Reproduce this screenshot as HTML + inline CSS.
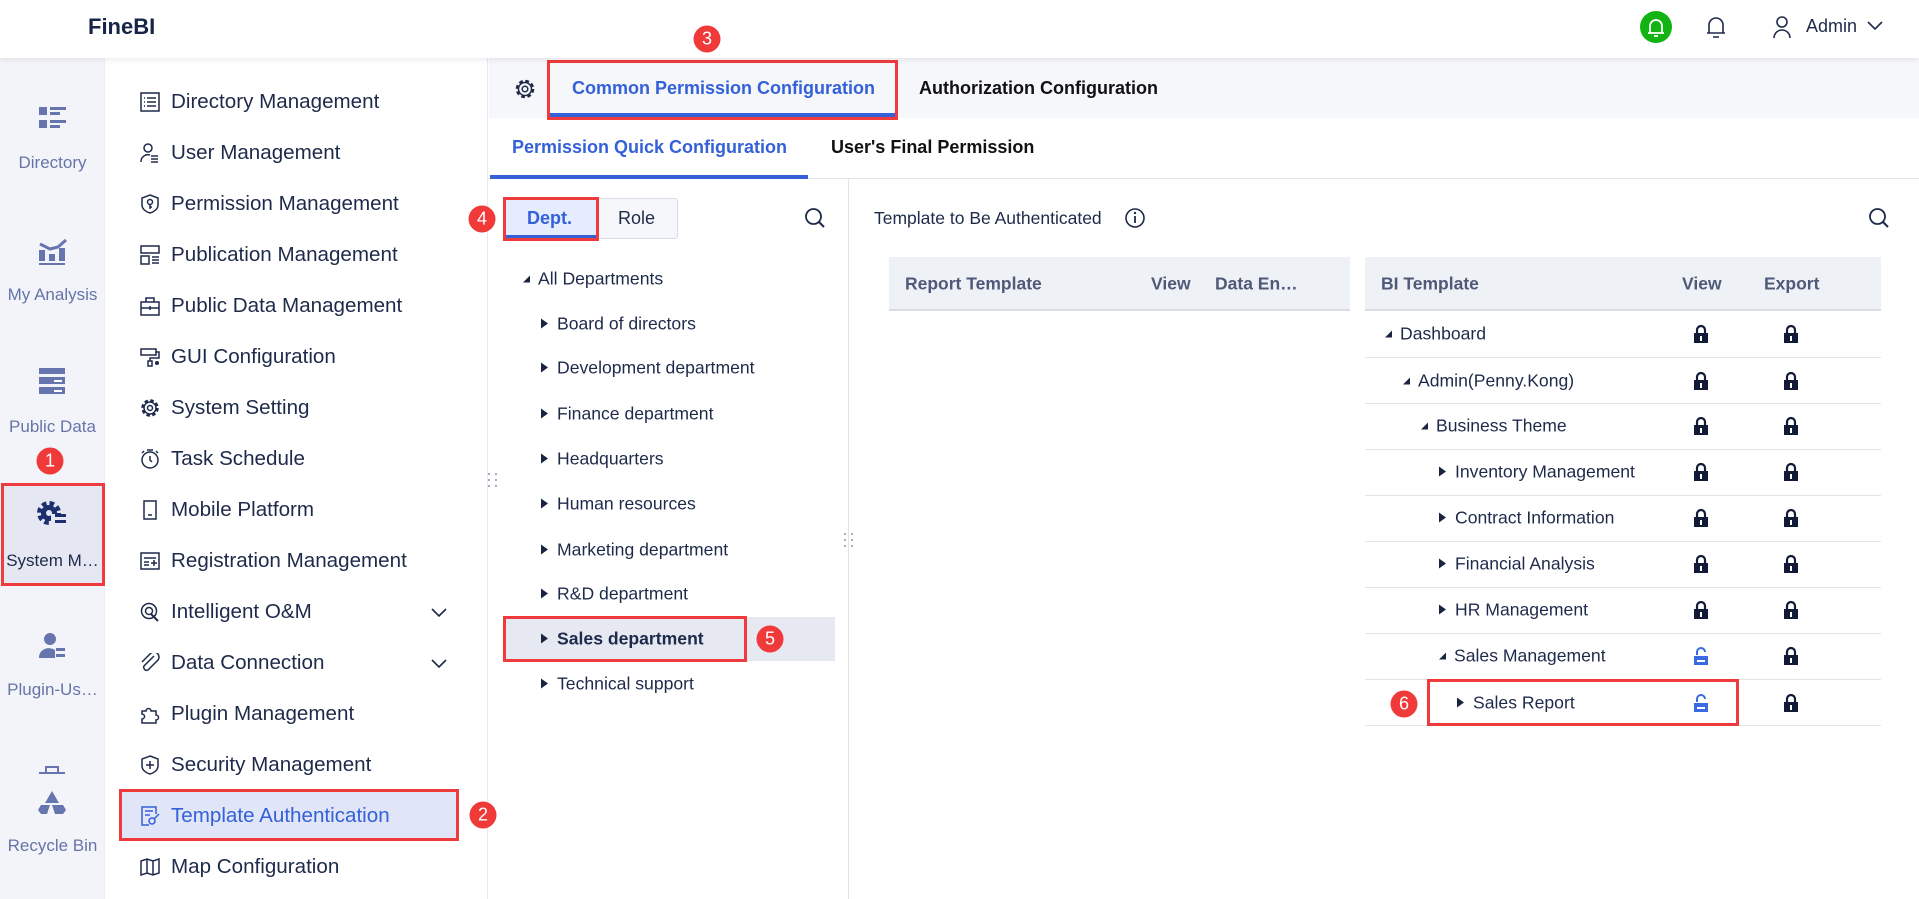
<!DOCTYPE html>
<html><head><meta charset="utf-8"><style>
*{margin:0;padding:0;box-sizing:border-box}
body{width:1919px;height:899px;position:relative;overflow:hidden;background:#fff;font-family:"Liberation Sans",sans-serif;color:#1f2a48}
.a{position:absolute;white-space:nowrap}
.badge{position:absolute;width:27px;height:27px;border-radius:50%;background:#f03a3a;color:#fff;font-size:18px;text-align:center;line-height:27px;transform:translate(-50%,-50%)}
.red{position:absolute;border:3px solid #ef3b3b}
.rl{position:absolute;left:0;width:105px;text-align:center;font-size:17px;color:#6675a8;transform:translateY(-50%)}
.ri{position:absolute;left:36px;transform:translateY(-50%)}
.mi{position:absolute;left:171px;font-size:20.6px;color:#1e2a4a;transform:translateY(-50%)}
.mic{position:absolute;left:140px;transform:translateY(-50%)}
.tr{position:absolute;font-size:17.6px;color:#1e2a4a;transform:translateY(-50%)}
.tri{display:inline-block;width:0;height:0;border-top:5px solid transparent;border-bottom:5px solid transparent;border-left:7px solid #1a2440;margin-right:9px;vertical-align:1px}
.trd{display:inline-block;width:0;height:0;border-left:7px solid transparent;border-bottom:7px solid #1a2440;margin-right:8px;vertical-align:2px}
.row{position:absolute;left:1365px;width:516px;height:1px;background:#e2e4ea}
.lk{position:absolute;transform:translate(-50%,-50%)}
.th{position:absolute;font-size:17.5px;font-weight:bold;color:#505a78;transform:translateY(-50%)}
</style></head><body>

<!-- header -->
<div class="a" style="left:0;top:0;width:1919px;height:58px;background:#fff;box-shadow:0 2px 6px rgba(0,0,0,.08);z-index:2"></div>
<div class="a" style="left:88px;top:14px;font-size:22px;font-weight:bold;color:#162447;z-index:3">FineBI</div>
<div class="a" style="left:1640px;top:11px;width:32px;height:32px;border-radius:50%;background:#12b312;z-index:3">
<svg width="32" height="32" viewBox="0 0 32 32"><path d="M10 22V15a6 6 0 0 1 12 0v7zM8 22h16M14 25h4M16 8v1" stroke="#fff" stroke-width="1.8" fill="none"/></svg></div>
<svg class="a" style="left:1704px;top:14px;z-index:3" width="24" height="26" viewBox="0 0 24 26"><path d="M5 19V11a7 7 0 0 1 14 0v8zM3 19h18M9 23h6" stroke="#1e2a4a" stroke-width="1.6" fill="none"/></svg>
<svg class="a" style="left:1772px;top:15px;z-index:3" width="20" height="24" viewBox="0 0 20 24"><circle cx="10" cy="7" r="5" stroke="#1e2a4a" stroke-width="1.6" fill="none"/><path d="M2 23a8 8 0 0 1 16 0" stroke="#1e2a4a" stroke-width="1.6" fill="none"/></svg>
<div class="a" style="left:1806px;top:16px;font-size:18px;color:#1e2a4a;z-index:3">Admin</div>
<svg class="a" style="left:1867px;top:21px;z-index:3" width="16" height="10" viewBox="0 0 16 10"><path d="M1 1l7 7 7-7" stroke="#1e2a4a" stroke-width="1.6" fill="none"/></svg>

<!-- rail -->
<div class="a" style="left:0;top:58px;width:105px;height:841px;background:#f3f4f9;border-right:1px solid #eceef3"></div>
<svg class="ri" style="top:118px" width="32" height="28" viewBox="0 0 32 28"><rect x="3" y="3" width="8" height="8" fill="#6675ad"/><rect x="3" y="16" width="8" height="8" fill="#6675ad"/><rect x="14" y="3" width="16" height="3" fill="#6675ad"/><rect x="14" y="8" width="10" height="3" fill="#6675ad"/><rect x="14" y="16" width="16" height="3" fill="#6675ad"/><rect x="14" y="21" width="10" height="3" fill="#6675ad"/></svg>
<div class="rl" style="top:163px">Directory</div>
<svg class="ri" style="top:251px" width="32" height="30" viewBox="0 0 32 30"><path d="M4 8l10 5 8-2 8-7" stroke="#6675ad" stroke-width="3" fill="none"/><rect x="3" y="14" width="6" height="11" fill="#6675ad"/><rect x="13" y="18" width="6" height="7" fill="#6675ad"/><rect x="23" y="12" width="6" height="13" fill="#6675ad"/><rect x="3" y="27" width="26" height="2" fill="#6675ad"/></svg>
<div class="rl" style="top:295px">My Analysis</div>
<svg class="ri" style="top:381px" width="32" height="30" viewBox="0 0 32 30"><rect x="3" y="2" width="26" height="6" fill="#6675ad"/><rect x="3" y="11" width="26" height="7" fill="#6675ad"/><rect x="3" y="21" width="26" height="7" fill="#6675ad"/><rect x="18" y="14" width="8" height="2" fill="#fff"/><rect x="18" y="24" width="8" height="2" fill="#fff"/></svg>
<div class="rl" style="top:427px">Public Data</div>
<div class="a" style="left:2px;top:484px;width:102px;height:101px;background:#e5e8f2"></div>
<div class="red" style="left:1px;top:483px;width:104px;height:103px"></div>
<svg class="ri" style="top:513px" width="32" height="30" viewBox="0 0 32 30"><circle cx="13" cy="15" r="9.5" fill="none" stroke="#1e2f6e" stroke-width="5" stroke-dasharray="4.5 3"/><circle cx="13" cy="15" r="8" fill="#1e2f6e"/><circle cx="13" cy="15" r="3" fill="#e5e8f2"/><rect x="15" y="16" width="17" height="12" fill="#e5e8f2"/><rect x="19" y="16" width="11" height="3" fill="#1e2f6e"/><rect x="19" y="22" width="11" height="3" fill="#1e2f6e"/></svg>
<div class="rl" style="top:561px;color:#1e2a4a">System M…</div>
<div class="badge" style="left:50px;top:461px">1</div>
<svg class="ri" style="top:646px" width="32" height="30" viewBox="0 0 32 30"><circle cx="14" cy="8" r="6" fill="#6675ad"/><path d="M3 27a10 9 0 0 1 16-8v8z" fill="#6675ad"/><rect x="20" y="17" width="9" height="3" fill="#6675ad"/><rect x="20" y="23" width="9" height="3" fill="#6675ad"/></svg>
<div class="rl" style="top:690px">Plugin-Us…</div>
<svg class="ri" style="top:769px" width="32" height="10" viewBox="0 0 32 10"><path d="M3 9h26M10 9V3h12v6" stroke="#6675ad" stroke-width="2" fill="none"/></svg>
<svg class="ri" style="top:802px" width="32" height="28" viewBox="0 0 32 28"><path d="M16 3l7 12h-14z M5 17l-3 5 3 4h6l3-9z M27 17l3 5-3 4h-8l-3-9z" fill="#6675ad"/></svg>
<div class="rl" style="top:846px">Recycle Bin</div>

<!-- menu -->
<div class="a" style="left:105px;top:58px;width:383px;height:841px;border-right:1px solid #e8eaef"></div>
<div class="a" style="left:120px;top:790px;width:338px;height:50px;background:#e0e6f7"></div>
<div class="red" style="left:119px;top:789px;width:340px;height:52px"></div>
<div class="badge" style="left:483px;top:815px">2</div>

<svg class="mic" style="top:102px" width="20" height="20" viewBox="0 0 20 20"><rect x="1" y="1" width="18" height="18" fill="none" stroke="#1e2a4a" stroke-width="1.5"/><path d="M4 6h1M4 10h1M4 14h1M7 6h9M7 10h9M7 14h9" stroke="#1e2a4a" stroke-width="1.5"/></svg><div class="mi" style="top:102px">Directory Management</div>
<svg class="mic" style="top:153px" width="20" height="20" viewBox="0 0 20 20"><circle cx="8" cy="5" r="4" fill="none" stroke="#1e2a4a" stroke-width="1.5"/><path d="M1 19a7 7 0 0 1 9-7M11 13h7M11 16h7M11 19h7" stroke="#1e2a4a" stroke-width="1.5" fill="none"/></svg><div class="mi" style="top:153px">User Management</div>
<svg class="mic" style="top:204px" width="20" height="20" viewBox="0 0 20 20"><path d="M10 1l8 3v7c0 4-4 7-8 8-4-1-8-4-8-8V4z" fill="none" stroke="#1e2a4a" stroke-width="1.5"/><circle cx="10" cy="8" r="2.5" fill="none" stroke="#1e2a4a" stroke-width="1.5"/><path d="M10 10v5M10 13h2" stroke="#1e2a4a" stroke-width="1.5"/></svg><div class="mi" style="top:204px">Permission Management</div>
<svg class="mic" style="top:255px" width="20" height="20" viewBox="0 0 20 20"><path d="M1 1h18v7H1zM1 11h8v8H1zM12 12h7M12 15h7M12 18h7" fill="none" stroke="#1e2a4a" stroke-width="1.5"/></svg><div class="mi" style="top:255px">Publication Management</div>
<svg class="mic" style="top:306px" width="20" height="20" viewBox="0 0 20 20"><path d="M1 6h18v13H1zM6 6V2h8v4M1 12h18M10 10v4" fill="none" stroke="#1e2a4a" stroke-width="1.5"/></svg><div class="mi" style="top:306px">Public Data Management</div>
<svg class="mic" style="top:357px" width="20" height="20" viewBox="0 0 20 20"><path d="M1 2h15v6H1zM16 5h3v6h-9v3M8 14h4v5H8z" fill="none" stroke="#1e2a4a" stroke-width="1.5"/><circle cx="17" cy="16" r="2" fill="#1e2a4a"/></svg><div class="mi" style="top:357px">GUI Configuration</div>
<svg class="mic" style="top:408px" width="20" height="20" viewBox="0 0 20 20"><circle cx="10" cy="10" r="7.5" fill="none" stroke="#1e2a4a" stroke-width="2.5" stroke-dasharray="3.5 2.4"/><circle cx="10" cy="10" r="6" fill="#fff" stroke="#1e2a4a" stroke-width="1.5"/><circle cx="10" cy="10" r="2.5" fill="none" stroke="#1e2a4a" stroke-width="1.5"/></svg><div class="mi" style="top:408px">System Setting</div>
<svg class="mic" style="top:459px" width="20" height="20" viewBox="0 0 20 20"><circle cx="10" cy="11" r="8" fill="none" stroke="#1e2a4a" stroke-width="1.5"/><path d="M7 1h6M10 7v4l2 2M2 4l2-2M18 4l-2-2" fill="none" stroke="#1e2a4a" stroke-width="1.5"/></svg><div class="mi" style="top:459px">Task Schedule</div>
<svg class="mic" style="top:510px" width="20" height="20" viewBox="0 0 20 20"><rect x="4" y="1" width="12" height="18" fill="none" stroke="#1e2a4a" stroke-width="1.5"/><path d="M8 15h4" stroke="#1e2a4a" stroke-width="1.5"/></svg><div class="mi" style="top:510px">Mobile Platform</div>
<svg class="mic" style="top:561px" width="20" height="20" viewBox="0 0 20 20"><rect x="1" y="2" width="18" height="16" fill="none" stroke="#1e2a4a" stroke-width="1.5"/><path d="M4 7h12M4 11h5M4 14h5M11 12h6M14 9v6" stroke="#1e2a4a" stroke-width="1.5"/></svg><div class="mi" style="top:561px">Registration Management</div>
<svg class="mic" style="top:612px" width="20" height="20" viewBox="0 0 20 20"><circle cx="9" cy="9" r="7.5" fill="none" stroke="#1e2a4a" stroke-width="1.5"/><circle cx="9" cy="9" r="3.5" fill="none" stroke="#1e2a4a" stroke-width="1.5"/><path d="M11 12l7 7" stroke="#1e2a4a" stroke-width="2"/></svg><div class="mi" style="top:612px">Intelligent O&amp;M</div>
<svg class="mic" style="top:663px" width="20" height="20" viewBox="0 0 20 20"><path d="M14 3l-10 10a3 3 0 0 0 4 4l10-10a5 5 0 0 0-7-7l-9 9" fill="none" stroke="#1e2a4a" stroke-width="1.5"/></svg><div class="mi" style="top:663px">Data Connection</div>
<svg class="a" style="left:431px;top:608px" width="16" height="10" viewBox="0 0 16 10"><path d="M1 1l7 7 7-7" stroke="#1e2a4a" stroke-width="1.6" fill="none"/></svg>
<svg class="a" style="left:431px;top:659px" width="16" height="10" viewBox="0 0 16 10"><path d="M1 1l7 7 7-7" stroke="#1e2a4a" stroke-width="1.6" fill="none"/></svg>
<svg class="mic" style="top:714px" width="20" height="20" viewBox="0 0 20 20"><path d="M2 7h4a2.5 2.5 0 1 1 5 0h5v4a2.5 2.5 0 1 1 0 5v3H2v-4a2.5 2.5 0 1 0 0-5z" fill="none" stroke="#1e2a4a" stroke-width="1.5"/></svg><div class="mi" style="top:714px">Plugin Management</div>
<svg class="mic" style="top:765px" width="20" height="20" viewBox="0 0 20 20"><path d="M10 1l8 3v7c0 4-4 7-8 8-4-1-8-4-8-8V4z" fill="none" stroke="#1e2a4a" stroke-width="1.5"/><path d="M6 10h8M10 6v8" stroke="#1e2a4a" stroke-width="1.5"/></svg><div class="mi" style="top:765px">Security Management</div>
<svg class="mic" style="top:816px" width="20" height="20" viewBox="0 0 20 20"><path d="M16 8V1H2v18h7M5 5h8M5 9h5" fill="none" stroke="#3460d8" stroke-width="1.5"/><circle cx="12" cy="15" r="3" fill="none" stroke="#3460d8" stroke-width="1.5"/><path d="M14 13l5-5" stroke="#3460d8" stroke-width="1.5"/></svg><div class="mi" style="top:816px;color:#3460d8">Template Authentication</div>
<svg class="mic" style="top:867px" width="20" height="20" viewBox="0 0 20 20"><path d="M1 4l6-2 6 2 6-2v14l-6 2-6-2-6 2zM7 2v14M13 4v14" fill="none" stroke="#1e2a4a" stroke-width="1.5"/></svg><div class="mi" style="top:867px">Map Configuration</div>

<!-- drag dots -->
<svg class="a" style="left:487px;top:472px" width="12" height="16"><g fill="#8a93a8"><circle cx="2" cy="2" r="1"/><circle cx="9" cy="2" r="1"/><circle cx="2" cy="8" r="1"/><circle cx="9" cy="8" r="1"/><circle cx="2" cy="14" r="1"/><circle cx="9" cy="14" r="1"/></g></svg>

<!-- top tabs -->
<div class="a" style="left:489px;top:58px;width:1430px;height:60px;background:#f6f7fb"></div>
<svg class="a" style="left:514px;top:78px" width="22" height="22" viewBox="0 0 22 22"><circle cx="11" cy="11" r="8" fill="none" stroke="#1e2a4a" stroke-width="2.6" stroke-dasharray="3.7 2.6"/><circle cx="11" cy="11" r="6.5" fill="#f6f7fb" stroke="#1e2a4a" stroke-width="1.5"/><circle cx="11" cy="11" r="2.8" fill="none" stroke="#1e2a4a" stroke-width="1.5"/></svg>
<div class="a" style="left:550px;top:113px;width:345px;height:4px;background:#3460d8"></div>
<div class="red" style="left:547px;top:60px;width:351px;height:60px"></div>
<div class="a" style="left:572px;top:78px;font-size:18px;font-weight:bold;color:#3460d8">Common Permission Configuration</div>
<div class="a" style="left:919px;top:78px;font-size:18px;font-weight:bold;color:#111">Authorization Configuration</div>
<div class="badge" style="left:707px;top:39px;z-index:5">3</div>

<div class="a" style="left:489px;top:178px;width:1430px;height:1px;background:#e2e4ea"></div>
<div class="a" style="left:490px;top:175px;width:318px;height:4px;background:#3460d8"></div>
<div class="a" style="left:512px;top:137px;font-size:18px;font-weight:bold;color:#3460d8">Permission Quick Configuration</div>
<div class="a" style="left:831px;top:137px;font-size:18px;font-weight:bold;color:#111">User's Final Permission</div>

<!-- dept panel -->
<div class="a" style="left:848px;top:179px;width:1px;height:720px;background:#e2e4ea"></div>
<div class="a" style="left:504px;top:198px;width:174px;height:41px;border:1px solid #d8dce6;border-radius:3px;background:#f6f7fb"></div>
<div class="a" style="left:505px;top:199px;width:92px;height:39px;background:#e5ecfd;border-bottom:3px solid #3460d8"></div>
<div class="red" style="left:503px;top:197px;width:96px;height:44px"></div>
<div class="a" style="left:527px;top:208px;font-size:18px;font-weight:bold;color:#3460d8">Dept.</div>
<div class="a" style="left:618px;top:208px;font-size:18px;color:#1e2a4a">Role</div>
<div class="badge" style="left:482px;top:219px">4</div>
<svg class="a" style="left:804px;top:207px" width="22" height="22" viewBox="0 0 22 22"><circle cx="9.5" cy="9.5" r="7.5" fill="none" stroke="#1e2a4a" stroke-width="1.8"/><path d="M15 15l5 5" stroke="#1e2a4a" stroke-width="2"/></svg>

<div class="tr" style="left:523px;top:279px"><span class="trd"></span>All Departments</div>
<div class="tr" style="left:541px;top:324px"><span class="tri"></span>Board of directors</div>
<div class="tr" style="left:541px;top:368px"><span class="tri"></span>Development department</div>
<div class="tr" style="left:541px;top:414px"><span class="tri"></span>Finance department</div>
<div class="tr" style="left:541px;top:459px"><span class="tri"></span>Headquarters</div>
<div class="tr" style="left:541px;top:504px"><span class="tri"></span>Human resources</div>
<div class="tr" style="left:541px;top:550px"><span class="tri"></span>Marketing department</div>
<div class="tr" style="left:541px;top:594px"><span class="tri"></span>R&amp;D department</div>
<div class="a" style="left:504px;top:617px;width:331px;height:44px;background:#e6e9f1"></div>
<div class="red" style="left:503px;top:616px;width:244px;height:46px"></div>
<div class="tr" style="left:541px;top:639px;font-weight:bold"><span class="tri"></span>Sales department</div>
<div class="badge" style="left:770px;top:639px">5</div>
<div class="tr" style="left:541px;top:684px"><span class="tri"></span>Technical support</div>
<svg class="a" style="left:843px;top:532px" width="12" height="16"><g fill="#8a93a8"><circle cx="2" cy="2" r="1"/><circle cx="9" cy="2" r="1"/><circle cx="2" cy="8" r="1"/><circle cx="9" cy="8" r="1"/><circle cx="2" cy="14" r="1"/><circle cx="9" cy="14" r="1"/></g></svg>

<!-- right -->
<div class="a" style="left:874px;top:208px;font-size:17.5px;color:#1e2a4a">Template to Be Authenticated</div>
<svg class="a" style="left:1124px;top:207px" width="22" height="22" viewBox="0 0 22 22"><circle cx="11" cy="11" r="9" fill="none" stroke="#1e2a4a" stroke-width="1.6"/><path d="M11 9v7" stroke="#1e2a4a" stroke-width="1.8"/><circle cx="11" cy="6" r="1.2" fill="#1e2a4a"/></svg>
<svg class="a" style="left:1868px;top:207px" width="22" height="22" viewBox="0 0 22 22"><circle cx="9.5" cy="9.5" r="7.5" fill="none" stroke="#1e2a4a" stroke-width="1.8"/><path d="M15 15l5 5" stroke="#1e2a4a" stroke-width="2"/></svg>

<div class="a" style="left:889px;top:257px;width:461px;height:54px;background:#eef1f6;border-bottom:2px solid #d9dce4"></div>
<div class="th" style="left:905px;top:284px">Report Template</div>
<div class="th" style="left:1151px;top:284px">View</div>
<div class="th" style="left:1215px;top:284px">Data En…</div>

<div class="a" style="left:1365px;top:257px;width:516px;height:54px;background:#eef1f6;border-bottom:2px solid #d9dce4"></div>
<div class="th" style="left:1381px;top:284px">BI Template</div>
<div class="th" style="left:1682px;top:284px">View</div>
<div class="th" style="left:1764px;top:284px">Export</div>

<div class="row" style="top:357px"></div><div class="row" style="top:403px"></div><div class="row" style="top:449px"></div><div class="row" style="top:495px"></div><div class="row" style="top:541px"></div><div class="row" style="top:587px"></div><div class="row" style="top:633px"></div><div class="row" style="top:679px"></div><div class="row" style="top:725px"></div>

<div class="tr" style="left:1385px;top:334px"><span class="trd"></span>Dashboard</div>
<div class="tr" style="left:1403px;top:381px"><span class="trd"></span>Admin(Penny.Kong)</div>
<div class="tr" style="left:1421px;top:426px"><span class="trd"></span>Business Theme</div>
<div class="tr" style="left:1439px;top:472px"><span class="tri"></span>Inventory Management</div>
<div class="tr" style="left:1439px;top:518px"><span class="tri"></span>Contract Information</div>
<div class="tr" style="left:1439px;top:564px"><span class="tri"></span>Financial Analysis</div>
<div class="tr" style="left:1439px;top:610px"><span class="tri"></span>HR Management</div>
<div class="tr" style="left:1439px;top:656px"><span class="trd"></span>Sales Management</div>
<div class="tr" style="left:1457px;top:703px"><span class="tri"></span>Sales Report</div>
<div class="red" style="left:1427px;top:679px;width:312px;height:47px"></div>
<div class="badge" style="left:1404px;top:704px">6</div>

<!-- locks -->
<svg width="0" height="0" style="position:absolute"><defs>
<symbol id="L" viewBox="0 0 16 20"><path d="M4 9V6a4 4 0 0 1 8 0v3" fill="none" stroke="#111a36" stroke-width="2.2"/><rect x="1" y="9" width="14" height="10" fill="#111a36"/><rect x="7" y="12" width="2" height="5" fill="#fff"/></symbol>
<symbol id="U" viewBox="0 0 16 20"><path d="M4 9V6a4 4 0 0 1 8 0" fill="none" stroke="#3a6ae0" stroke-width="2"/><rect x="1" y="10" width="14" height="9" fill="#3a6ae0"/><rect x="4" y="14" width="8" height="2" fill="#fff"/></symbol>
</defs></svg>
<svg class="lk" style="left:1701px;top:334px" width="16" height="20"><use href="#L"/></svg><svg class="lk" style="left:1791px;top:334px" width="16" height="20"><use href="#L"/></svg>
<svg class="lk" style="left:1701px;top:381px" width="16" height="20"><use href="#L"/></svg><svg class="lk" style="left:1791px;top:381px" width="16" height="20"><use href="#L"/></svg>
<svg class="lk" style="left:1701px;top:426px" width="16" height="20"><use href="#L"/></svg><svg class="lk" style="left:1791px;top:426px" width="16" height="20"><use href="#L"/></svg>
<svg class="lk" style="left:1701px;top:472px" width="16" height="20"><use href="#L"/></svg><svg class="lk" style="left:1791px;top:472px" width="16" height="20"><use href="#L"/></svg>
<svg class="lk" style="left:1701px;top:518px" width="16" height="20"><use href="#L"/></svg><svg class="lk" style="left:1791px;top:518px" width="16" height="20"><use href="#L"/></svg>
<svg class="lk" style="left:1701px;top:564px" width="16" height="20"><use href="#L"/></svg><svg class="lk" style="left:1791px;top:564px" width="16" height="20"><use href="#L"/></svg>
<svg class="lk" style="left:1701px;top:610px" width="16" height="20"><use href="#L"/></svg><svg class="lk" style="left:1791px;top:610px" width="16" height="20"><use href="#L"/></svg>
<svg class="lk" style="left:1701px;top:656px" width="16" height="20"><use href="#U"/></svg><svg class="lk" style="left:1791px;top:656px" width="16" height="20"><use href="#L"/></svg>
<svg class="lk" style="left:1701px;top:703px" width="16" height="20"><use href="#U"/></svg><svg class="lk" style="left:1791px;top:703px" width="16" height="20"><use href="#L"/></svg>

</body></html>
